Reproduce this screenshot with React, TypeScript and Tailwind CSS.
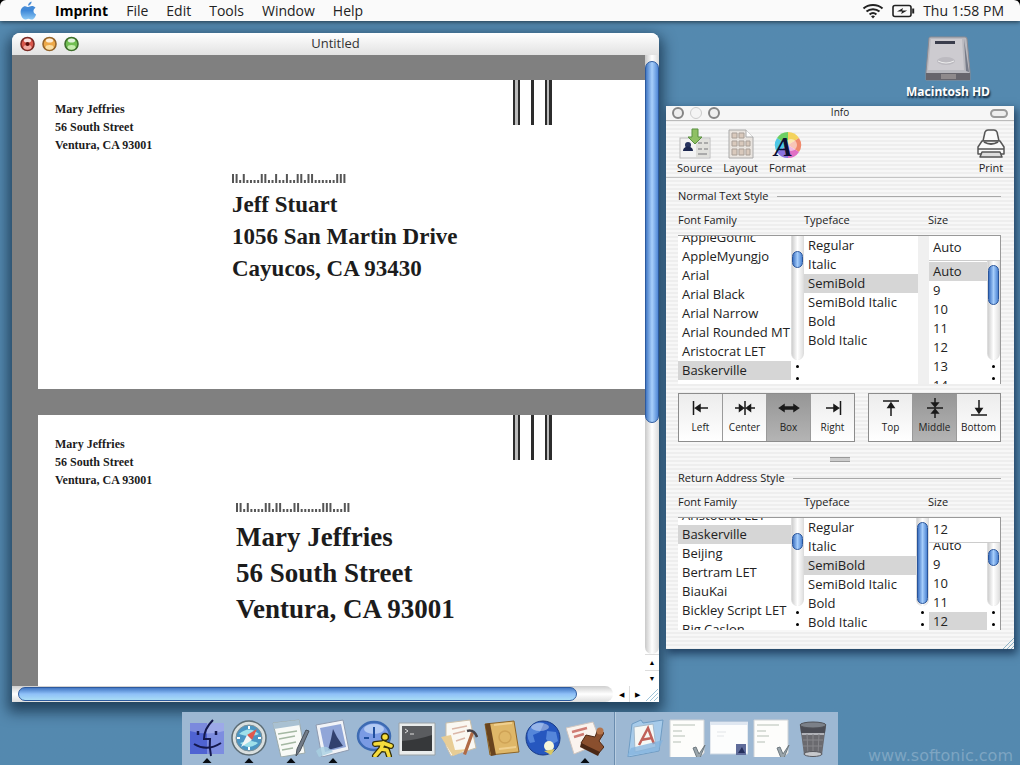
import { ReactNode } from "react";
import clsx from "clsx";

const stripes =
  "bg-[repeating-linear-gradient(180deg,#f7f7f7_0px,#f7f7f7_2px,#eeeeee_2px,#eeeeee_4px)]";

const menus = ["File", "Edit", "Tools", "Window", "Help"];

const lights = [
  { label: "Close", edge: "#7a2a24", fill: "#d9574c", shine: "#f6b9b0" },
  { label: "Minimize", edge: "#94642a", fill: "#eda94a", shine: "#fde9b5" },
  { label: "Zoom", edge: "#3d6e2b", fill: "#71bf52", shine: "#d3f5bd" },
];

const AppleLogo = () => (
  <svg width="17" height="20" viewBox="0 0 17 20" aria-hidden="true">
    <defs>
      <linearGradient id="apple" x1="0" y1="0" x2="0" y2="1">
        <stop offset="0" stopColor="#4f8fd6" />
        <stop offset="0.5" stopColor="#3f88d8" />
        <stop offset="1" stopColor="#8cc8f4" />
      </linearGradient>
    </defs>
    <path
      fill="url(#apple)"
      d="M11.6.6c.2 1.900-1.500 4.100-3.500 4.200C7.900 2.900 9.700.9 11.600.6zM8.200 6.100c.9 0 2-1 3.700-1 1.400 0 2.700.6 3.600 1.700-2.800 1.700-2.600 5.300.6 6.600-.7 2.200-2.300 5.100-4.200 5.100-1.300 0-1.900-.8-3.400-.8s-2.100.8-3.400.8C2.700 18.500.6 14.700.6 11.300.6 7.600 2.800 5.200 5.200 5.200c1.300 0 2.300.9 3 .9z"
    />
  </svg>
);

const MenuBar = () => (
  <header className="relative z-10 flex h-[21px] items-center justify-between rounded-t-md bg-[#fafafa] pl-5 pr-4 text-[14px] text-[#222] shadow-[0_1px_4px_rgba(0,0,0,0.6)]">
    <nav className="flex items-center gap-[18px]">
      <button aria-label="Apple menu">
        <AppleLogo />
      </button>
      <button className="font-bold text-black">Imprint</button>
      {menus.map((m) => (
        <button key={m}>{m}</button>
      ))}
    </nav>
    <div className="flex items-center gap-2">
      <svg width="22" height="16" viewBox="0 0 22 16" fill="none" stroke="#222" strokeWidth="2" aria-label="AirPort">
        <path d="M1.500 5.500C6.500.8 15.500.8 20.500 5.500" />
        <path d="M4.500 8.600c3.500-3.300 9.500-3.300 13 0" />
        <path d="M7.600 11.500c2-1.800 4.800-1.800 6.800 0" />
        <path d="M11 15.500l-2-2.300c1.200-1 2.800-1 4 0z" fill="#222" stroke="none" />
      </svg>
      <svg width="23" height="14" viewBox="0 0 23 14" fill="none" stroke="#222" strokeWidth="1.600" aria-label="Battery">
        <rect x="1" y="1.500" width="18" height="11" rx="2" />
        <path d="M21.200 4.500v5" strokeWidth="2" />
        <path d="M5 7.500l6-3.500-.8 2.500h5l-6 3.600.8-2.600z" fill="#222" stroke="none" />
      </svg>
      <span>Thu 1:58 PM</span>
    </div>
  </header>
);

/* USPS bar code, "|" is a full bar and "." a half bar */
const Barcode = ({ code }: { code: string }) => (
  <svg width="115" height="10" viewBox={`0 0 ${code.length * 3.6} 10`} preserveAspectRatio="none" aria-hidden="true">
    {code.split("").map((c, i) => (
      <rect key={i} x={i * 3.6} y={c === "|" ? 0 : 6} width="2" height={c === "|" ? 9 : 3} fill="#555" />
    ))}
  </svg>
);

type EnvelopeProps = {
  code: string;
  lines: string[];
  className: string;
  textClass: string;
};

const Envelope = ({ code, lines, className, textClass }: EnvelopeProps) => (
  <article className="relative h-[309px] shrink-0 bg-white pl-[17px] pt-5 font-['Liberation_Serif',serif] font-bold text-[#1c1c1c]">
    <svg className="absolute right-[92px] top-0" width="40" height="45" viewBox="0 0 40 45" fill="#2c2c2c" aria-hidden="true">
      <rect x="0" width="2" height="45" />
      <rect x="2" width="4" height="45" fill="#bbb" />
      <rect x="5" width="2" height="45" />
      <rect x="18" width="3" height="45" />
      <rect x="32" width="2" height="45" />
      <rect x="34" width="2" height="45" fill="#bbb" />
      <rect x="36" width="3" height="45" />
    </svg>
    <address className="text-[12px] leading-[18px] not-italic">
      Mary Jeffries
      <br />
      56 South Street
      <br />
      Ventura, CA 93001
    </address>
    <div className={clsx("flex flex-col", className)}>
      <Barcode code={code} />
      <address className={clsx("whitespace-nowrap not-italic", textClass)}>
        {lines.map((l) => (
          <div key={l}>{l}</div>
        ))}
      </address>
    </div>
  </article>
);

const DocumentWindow = () => (
  <section className="absolute bottom-[63px] left-3 right-[361px] top-[33px] flex flex-col overflow-hidden rounded-t-lg bg-white shadow-[0_6px_14px_4px_rgba(0,20,40,0.6)]">
    <div className="relative flex h-[22px] shrink-0 items-center bg-linear-to-b from-white to-[#e2e2e2] px-2">
      <div className="flex gap-[7px]">
        {lights.map((l) => (
          <button key={l.label} aria-label={l.label}>
            <svg width="15" height="16" viewBox="0 0 15 16" className="block">
              <circle cx="7.500" cy="8" r="6.500" fill={l.fill} stroke={l.edge} strokeWidth="1.600" />
              <ellipse cx="7.500" cy="4.500" rx="3.600" ry="2" fill="#fff" opacity="0.800" />
              <ellipse cx="7.500" cy="11.300" rx="4" ry="2.400" fill={l.shine} opacity="0.850" />
              {l.label === "Close" && <circle cx="7.500" cy="8" r="2" fill="#5a0f0c" />}
            </svg>
          </button>
        ))}
      </div>
      <h1 className="absolute inset-x-0 text-center text-[13px] font-medium text-[#333]">Untitled</h1>
    </div>
    <div className="flex min-h-0 flex-1">
      <div className="flex min-w-0 flex-1 flex-col gap-[26px] overflow-hidden bg-[#808080] pl-[26px] pt-[25px]">
        <Envelope
          code="||.|....||..|..|..||.||......|||"
          lines={["Jeff Stuart", "1056 San Martin Drive", "Cayucos, CA 93430"]}
          className="ml-[177px] mt-5 gap-[5px]"
          textClass="text-[23px] leading-8"
        />
        <Envelope
          code="||.|....||.||...||......|||...||"
          lines={["Mary Jeffries", "56 South Street", "Ventura, CA 93001"]}
          className="ml-[181px] mt-[14px] gap-[6px]"
          textClass="text-[27px] leading-9"
        />
      </div>
      <div className="flex w-[14px] shrink-0 flex-col bg-white">
        <div className="flex min-h-0 flex-1 flex-col rounded-b-full bg-linear-to-r from-[#c9c9c9] via-white to-[#dcdcdc] pt-[6px]">
          <div className="h-[61%] rounded-full border border-[#2d5a9e] bg-linear-to-r from-[#4378c4] via-[#a9d0fb] to-[#5189d6]" />
        </div>
        <button aria-label="Scroll up" className="h-4 border-t border-[#ddd] text-[7px] leading-none text-black">▲</button>
        <button aria-label="Scroll down" className="h-4 border-t border-[#ddd] text-[7px] leading-none text-black">▼</button>
      </div>
    </div>
    <div className="flex h-4 shrink-0 bg-white">
      <div className="flex min-w-0 flex-1 rounded-r-full bg-linear-to-b from-[#cfcfcf] via-white to-[#dedede] pl-[6px]">
        <div className="my-px w-[94%] rounded-full border border-[#2d5a9e] bg-linear-to-b from-[#4378c4] via-[#8fc0f8] to-[#a9dcf4]" />
      </div>
      <button aria-label="Scroll left" className="w-4 text-[7px] leading-none text-black">◀</button>
      <button aria-label="Scroll right" className="w-4 border-l border-[#ddd] text-[7px] leading-none text-black">▶</button>
      <svg width="14" height="16" viewBox="0 0 14 16" stroke="#9fc3d8" aria-hidden="true">
        <path d="M1 15L13 3M5 15l8-8M9 15l4-4" />
      </svg>
    </div>
  </section>
);

type ScrollBarProps = { thumb: string };

const ScrollBar = ({ thumb }: ScrollBarProps) => (
  <div className="flex w-[13px] shrink-0 flex-col bg-white">
    <div className="min-h-0 flex-1 rounded-b-full border-x border-[#ddd] bg-linear-to-r from-[#cfcfcf] via-white to-[#e2e2e2]">
      <div className={clsx("rounded-full border border-[#28549b] bg-linear-to-r from-[#3f73c2] via-[#a5cdfb] to-[#4d84d2]", thumb)} />
    </div>
    <span className="flex h-3 items-center justify-center">
      <i className="size-[3px] rounded-full bg-black" />
    </span>
    <span className="flex h-3 items-center justify-center">
      <i className="size-[3px] rounded-full bg-black" />
    </span>
  </div>
);

type FontListProps = {
  label: string;
  items: string[];
  selected: string;
  className?: string;
};

const FontList = ({ label, items, selected, className }: FontListProps) => (
  <div className="min-w-0 flex-1 overflow-hidden bg-white">
    <ul aria-label={label} className={className}>
      {items.map((item) => (
        <li key={item}>
          <button
            aria-pressed={item === selected}
            className={clsx(
              "block h-[19px] w-full overflow-hidden whitespace-nowrap pl-1 text-left leading-[19px]",
              item === selected && "bg-[#d6d6d6]"
            )}
          >
            {item}
          </button>
        </li>
      ))}
    </ul>
  </div>
);

type StylePanelProps = {
  id: string;
  title: string;
  height: string;
  family: ReactNode;
  typeface: ReactNode;
  size: string;
  sizes: ReactNode;
};

const StylePanel = ({ id, title, height, family, typeface, size, sizes }: StylePanelProps) => (
  <section className="pl-3 pr-[13px]">
    <h2 className="flex h-5 items-center gap-2 text-[11px] font-medium after:h-px after:flex-1 after:bg-[#a8a8a8]">{title}</h2>
    <div className="mt-1 grid h-5 grid-cols-[126px_1fr_73px] items-center text-[11px] font-medium">
      <span>Font Family</span>
      <span>Typeface</span>
      <label htmlFor={id}>Size</label>
    </div>
    <div className={clsx("mt-[5px] grid grid-cols-[126px_1fr_72px] text-[13px]", height)}>
      <div className="flex min-h-0 overflow-hidden border-t border-[#999]">{family}</div>
      <div className="flex min-h-0 overflow-hidden border-t border-[#999]">{typeface}</div>
      <div className="flex min-h-0 flex-col overflow-hidden border-r border-t border-[#999] bg-white">
        <div className="h-[25px] shrink-0 border-b border-[#ccc]">
          <input id={id} defaultValue={size} className="block h-[22px] w-full bg-white pl-1 outline-none" />
        </div>
        <div className="flex min-h-0 flex-1">{sizes}</div>
      </div>
    </div>
  </section>
);

const Arrow = ({ d }: { d: string }) => (
  <svg width="22" height="20" viewBox="0 0 22 20" fill="#1a1a1a" stroke="#1a1a1a" strokeWidth="1.500" aria-hidden="true">
    <path d={d} />
  </svg>
);

const horizontal = [
  { label: "Left", d: "M3.500 3v14M8 10h10M5.500 10l4.500-3v6z" },
  { label: "Center", d: "M11 3v14M1 10h5M9.500 10L5.500 7v6zM21 10h-5M12.500 10l4-3v6z" },
  { label: "Box", d: "M1.500 10L6 7v6zM20.500 10L16 7v6zM5 9h12v2H5z" },
  { label: "Right", d: "M18.500 3v14M4 10h10M16.500 10L12 7v6z" },
];

const vertical = [
  { label: "Top", d: "M3 3h16M11 8v10M11 5l-3 4.500h6z" },
  { label: "Middle", d: "M3 10h16M11 0v5M11 8.500L8 5h6zM11 20v-5M11 11.500L8 15h6z" },
  { label: "Bottom", d: "M3 17h16M11 2v10M11 15l-3-4.500h6z" },
];

const Segments = ({ options, active }: { options: { label: string; d: string }[]; active: string }) => (
  <div className="flex border border-[#8c8c8c]">
    {options.map((o) => (
      <button
        key={o.label}
        aria-pressed={o.label === active}
        className={clsx(
          "flex h-[47px] w-[44px] flex-col items-center border-r border-[#9a9a9a] pt-1 text-[10px] font-medium last:w-[43px] last:border-r-0",
          o.label === active ? "bg-linear-to-b from-[#969696] to-[#b4b4b4]" : "bg-linear-to-b from-[#ececec] to-white"
        )}
      >
        <Arrow d={o.d} />
        <span className="leading-[18px]">{o.label}</span>
      </button>
    ))}
  </div>
);

const SourceIcon = () => (
  <svg width="32" height="32" viewBox="0 0 32 32" aria-hidden="true">
    <rect x="1" y="10" width="30" height="20" fill="#f3f3f3" stroke="#bbb" />
    <path d="M17 11h13v18H17z" fill="#e0e0dc" />
    <circle cx="9" cy="17" r="3" fill="#27335e" />
    <path d="M4 23c0-6 10-6 10 0z" fill="#1d2850" />
    <path d="M19 15h4M25 15h4M19 21h4M25 21h4M19 26h9" stroke="#aaa" strokeWidth="2" />
    <path d="M13 1h6v8h4l-7 7-7-7h4z" fill="#8fc064" stroke="#5b9140" />
  </svg>
);

const LayoutIcon = () => (
  <svg width="32" height="32" viewBox="0 0 32 32" aria-hidden="true">
    <path d="M4 2h17l7 7v21H4z" fill="#e9e4df" stroke="#aaa" />
    <path d="M21 2v7h7" fill="#fff" stroke="#aaa" />
    <g fill="#d9c9bc" stroke="#a99f97">
      <path d="M7 5h5v5H7zM14 5h5v5h-5zM7 13h5v5H7zM14 13h5v5h-5zM21 13h4v5h-4zM7 21h5v6H7zM14 21h5v6h-5zM21 21h4v6h-4z" />
    </g>
  </svg>
);

const FormatIcon = () => (
  <svg width="32" height="32" viewBox="0 0 32 32" aria-hidden="true">
    <path d="M16 17L16 4a13 13 0 0 1 11 6z" fill="#f4d35e" />
    <path d="M16 17l11-7a13 13 0 0 1 0 14z" fill="#f08a6c" />
    <path d="M16 17l11 7a13 13 0 0 1-11 6z" fill="#e06fc4" />
    <path d="M16 17v13a13 13 0 0 1-11-6z" fill="#8a72e0" />
    <path d="M16 17L5 24a13 13 0 0 1 0-14z" fill="#4dc7e6" />
    <path d="M16 17L5 10a13 13 0 0 1 11-6z" fill="#6dcf62" />
    <circle cx="19" cy="17" r="6" fill="#fff" opacity="0.500" />
    <text x="2" y="28" fontSize="28" fontWeight="bold" fontStyle="italic" fontFamily="Liberation Serif, serif" fill="#0b0f33">A</text>
  </svg>
);

const PrintIcon = () => (
  <svg width="30" height="32" viewBox="0 0 30 32" fill="#fafafa" stroke="#555" strokeWidth="1.500" strokeLinejoin="round" aria-hidden="true">
    <path d="M7 13L9 4q1-2 3-2h6q2 0 3 2l2 9z" />
    <path d="M6 13h18l4 6v7H2v-7z" />
    <path d="M8 14q7 4 14 0" fill="none" strokeWidth="2" />
    <path d="M2 21h26" />
    <path d="M6 24h18l2 5H4z" fill="#ddd" />
  </svg>
);

const tools = [
  { label: "Source", icon: <SourceIcon /> },
  { label: "Layout", icon: <LayoutIcon /> },
  { label: "Format", icon: <FormatIcon /> },
];

const ToolButton = ({ label, icon }: { label: string; icon: ReactNode }) => (
  <button className="flex flex-col items-center text-[11px] font-medium leading-4">
    {icon}
    {label}
  </button>
);

const InfoWindow = () => (
  <aside className={clsx("absolute right-[6px] top-[106px] w-[348px] pb-[19px] text-[#222] shadow-[2px_4px_8px_1px_rgba(0,20,50,0.6)]", stripes)}>
    <div className="relative flex h-[15px] items-center justify-between border-b border-[#bbb] bg-[#f6f6f6] px-[6px]">
      <div className="flex gap-[6px]">
        <button aria-label="Close info" className="size-3 rounded-full border-2 border-[#858585] bg-[#eee]" />
        <button aria-label="Minimize info" className="size-3 rounded-full border border-[#ccc] bg-[#f4f4f4]" />
        <button aria-label="Zoom info" className="size-3 rounded-full border-2 border-[#858585] bg-[#eee]" />
      </div>
      <h1 className="absolute inset-x-0 top-0 text-center text-[10px] font-medium leading-3">Info</h1>
      <button aria-label="Toggle toolbar" className="h-[9px] w-[18px] rounded-full border-2 border-[#9a9a9a] bg-[#eee]" />
    </div>
    <div className="flex items-end justify-between border-b border-[#c4c4c4] pb-[1px] pl-[11px] pr-2 pt-[7px]">
      <div className="flex gap-[11px]">
        {tools.map((t) => (
          <ToolButton key={t.label} label={t.label} icon={t.icon} />
        ))}
      </div>
      <ToolButton label="Print" icon={<PrintIcon />} />
    </div>
    <div className="pt-2">
      <StylePanel
        id="normal-size"
        title="Normal Text Style"
        height="h-[149px]"
        family={
          <>
            <FontList
              label="Font Family"
              selected="Baskerville"
              className="-mt-2"
              items={["AppleGothic", "AppleMyungjo", "Arial", "Arial Black", "Arial Narrow", "Arial Rounded MT", "Aristocrat LET", "Baskerville"]}
            />
            <ScrollBar thumb="mt-[15px] h-[17px]" />
          </>
        }
        typeface={
          <>
            <FontList
              label="Typeface"
              selected="SemiBold"
              items={["Regular", "Italic", "SemiBold", "SemiBold Italic", "Bold", "Bold Italic"]}
            />
            <div className="w-[11px] bg-[#f0f0f0]" />
          </>
        }
        size="Auto"
        sizes={
          <>
            <FontList label="Sizes" selected="Auto" className="mt-px" items={["Auto", "9", "10", "11", "12", "13", "14"]} />
            <ScrollBar thumb="mt-1 h-10" />
          </>
        }
      />
      <div className="mt-[9px] flex justify-between pl-3 pr-[13px]">
        <Segments options={horizontal} active="Box" />
        <Segments options={vertical} active="Middle" />
      </div>
      <div className="mx-auto mt-[15px] h-[5px] w-5 border-y border-[#999] bg-[#ccc]" />
    </div>
    <div className="pt-[6px]">
      <StylePanel
        id="return-size"
        title="Return Address Style"
        height="h-[113px]"
        family={
          <>
            <FontList
              label="Font Family"
              selected="Baskerville"
              className="-mt-[12px]"
              items={["Aristocrat LET", "Baskerville", "Beijing", "Bertram LET", "BiauKai", "Bickley Script LET", "Big Caslon"]}
            />
            <ScrollBar thumb="mt-[15px] h-[17px]" />
          </>
        }
        typeface={
          <>
            <FontList
              label="Typeface"
              selected="SemiBold"
              items={["Regular", "Italic", "SemiBold", "SemiBold Italic", "Bold", "Bold Italic"]}
            />
            <ScrollBar thumb="mt-1 h-[82px]" />
          </>
        }
        size="12"
        sizes={
          <>
            <FontList label="Sizes" selected="12" className="-mt-[7px]" items={["Auto", "9", "10", "11", "12"]} />
            <ScrollBar thumb="mt-[6px] h-[17px]" />
          </>
        }
      />
    </div>
    <svg className="absolute bottom-0 right-0" width="12" height="12" viewBox="0 0 12 12" stroke="#8fb4c6" aria-hidden="true">
      <path d="M1 12L12 1M5 12l7-7M9 12l3-3" />
    </svg>
  </aside>
);

const HardDrive = () => (
  <button className="absolute right-[30px] top-[36px] flex flex-col items-center text-[12px] font-bold leading-4 text-white [text-shadow:1px_2px_2px_#0a1a2c]">
    <svg width="46" height="48" viewBox="0 0 46 48" aria-hidden="true">
      <path d="M4 2Q4 1 6 1h34q2 0 2 2l3 33v8H1v-8z" fill="#b9b9bf" stroke="#8a8a92" />
      <path d="M6 3h31l2 31H3z" fill="#cdcbd0" />
      <path d="M39 3l5 33-3-1z" fill="#777b88" />
      <rect x="10" y="5" width="20" height="3" fill="#3a3d4c" />
      <ellipse cx="21" cy="25" rx="9" ry="4" fill="#bcbac0" />
      <path d="M13 25q8 4 16 0" stroke="#eee" fill="none" />
      <path d="M1 37h44v7H1z" fill="#67656c" />
      <path d="M16 38h15v5H16z" fill="#8f8a8c" />
    </svg>
    <span>Macintosh HD</span>
  </button>
);

const Page = ({ children }: { children?: ReactNode }) => (
  <>
    <path d="M1 0h34v33l-5 5H1z" fill="#fdfdfb" stroke="#cfd3d6" />
    <path d="M4 5h22M4 11h9M4 16h12M4 22h8" stroke="#cdd4cd" strokeWidth="1.500" />
    {children}
  </>
);

const Check = () => <path d="M24 28l3-1 3 7 6-9-5 13h-3z" fill="#9aa5ab" stroke="#6f7a80" />;

const apps = [
  {
    name: "Finder",
    running: true,
    art: (
      <>
        <path d="M1 3h17v31H1z" fill="#4f63d2" />
        <path d="M18 3h17v31H18z" fill="#7d8de0" />
        <path d="M1 3h34v8q-17 5-34 0z" fill="#fff" opacity="0.250" />
        <path d="M24 0q-9 9-9 19h6q-1 8 1 17" fill="none" stroke="#14184c" strokeWidth="2" />
        <path d="M5 24q13 8 27-1" fill="none" stroke="#14184c" strokeWidth="2" />
        <path d="M9 11v4M27 11v4" stroke="#14184c" strokeWidth="2.500" />
      </>
    ),
  },
  {
    name: "Safari",
    running: true,
    art: (
      <>
        <circle cx="18" cy="18" r="17" fill="#d9dfdf" stroke="#5c6c74" strokeWidth="1.500" />
        <circle cx="18" cy="18" r="13" fill="#4b96c4" stroke="#7b8f98" />
        <path d="M8 14q10-9 20 0-9 4-20 0zM9 23q9 8 18 0-8-4-18 0z" fill="#9fe0ea" />
        <path d="M26 9l-5 11-5-5z" fill="#e0584d" />
        <path d="M10 27l6-12 5 5z" fill="#f3f6f6" />
        <path d="M18 6v3M18 27v3M6 18h3M27 18h3" stroke="#fff" strokeWidth="2" />
      </>
    ),
  },
  {
    name: "TextEdit",
    running: true,
    art: (
      <>
        <path d="M0 3l26-3 6 33-24 4z" fill="#f8faf7" stroke="#9daaa9" />
        <path d="M0 3l26-3 1 5-26 4z" fill="#a9c1d2" />
        <path d="M5 14l19-3M6 19l16-3M8 25l15-3M9 30l11-2" stroke="#a4b8a3" strokeWidth="1.500" />
        <path d="M36 11l-9 20-4 5 1-7 9-19z" fill="#737c88" stroke="#48505a" />
      </>
    ),
  },
  {
    name: "Preview",
    running: true,
    art: (
      <>
        <path d="M1 5l27-5 6 30-27 7z" fill="#f1f3f7" stroke="#8f9bb0" />
        <path d="M5 8l21-4 5 23-21 5z" fill="#91a6d8" />
        <path d="M18 9l4 8 6 9-15 4 3-11z" fill="#32416f" />
        <path d="M1 31q9-9 17 1l-14 5z" fill="#a9cfe1" opacity="0.800" />
      </>
    ),
  },
  {
    name: "AIM",
    art: (
      <>
        <ellipse cx="17" cy="16" rx="16" ry="14" fill="#7a9be4" stroke="#3d6bb3" strokeWidth="2.500" />
        <ellipse cx="17" cy="9" rx="10" ry="5" fill="#d9eafb" opacity="0.600" />
        <path d="M17 7v11M7 18h5" stroke="#1f4f9e" strokeWidth="2" />
        <g fill="none" strokeLinecap="round" strokeLinejoin="round">
          <path d="M27 23l-9 1M26 23l8 3M26 23l-2 6-6 7M24 29l6 1 2 6" stroke="#332e08" strokeWidth="6" />
          <path d="M27 23l-9 1M26 23l8 3M26 23l-2 6-6 7M24 29l6 1 2 6" stroke="#f6dc3d" strokeWidth="3.500" />
        </g>
        <circle cx="28" cy="17" r="3.500" fill="#f6dc3d" stroke="#332e08" strokeWidth="1.500" />
      </>
    ),
  },
  {
    name: "Terminal",
    art: (
      <>
        <path d="M0 3h36v32H0z" fill="#e9ecec" stroke="#9aa2a6" />
        <path d="M3 6h30v25H3z" fill="#36383a" />
        <path d="M3 6h30v9q-15 5-30 6z" fill="#5a5c5f" />
        <path d="M6 9l3 2-3 2M11 14h4" stroke="#ddd" fill="none" />
      </>
    ),
  },
  {
    name: "Script Editor",
    art: (
      <>
        <path d="M5 3l24-3 6 28-25 8-5-10z" fill="#faf8f2" stroke="#cbbfa9" />
        <path d="M0 17l10-2 4 15 13-1-15 7z" fill="#e8cd95" />
        <path d="M11 9l15-3M12 14l12-3M15 21l9-3" stroke="#dab7a8" strokeWidth="1.500" />
        <path d="M33 13l-8 22-3-1 8-22z" fill="#b06a45" />
        <path d="M26 11q7-2 10 6" fill="none" stroke="#474247" strokeWidth="2.500" />
      </>
    ),
  },
  {
    name: "Address Book",
    art: (
      <>
        <path d="M2 4l29-3 5 31-29 3z" fill="#dfb768" stroke="#8c6427" />
        <path d="M2 4l5-1 6 32-5 1z" fill="#68431e" />
        <path d="M11 5l18-2M16 29l17-2" stroke="#f0d08f" strokeWidth="2" />
        <circle cx="22" cy="17" r="6" fill="none" stroke="#cfa356" strokeWidth="1.500" />
      </>
    ),
  },
  {
    name: "Network",
    art: (
      <>
        <circle cx="18" cy="18" r="17" fill="#2657bf" stroke="#183a86" />
        <path d="M5 8q7-8 14-5l-4 9-7 3 2 7-5 1q-5-8 0-15zM22 11l9 1 2 9-7 4-5-6z" fill="#5586da" />
        <ellipse cx="15" cy="7" rx="9" ry="4" fill="#fff" opacity="0.400" />
        <circle cx="24" cy="26" r="5" fill="#f7f7da" />
        <path d="M19 31l7 4 4-6z" fill="#d9c765" />
      </>
    ),
  },
  {
    name: "Imprint",
    running: true,
    art: (
      <>
        <path d="M-1 8l27-6 8 21-27 11z" fill="#faf3ee" stroke="#cfc5bf" />
        <path d="M5 12l15-4M7 17l10-3" stroke="#cf7c74" strokeWidth="2.500" />
        <path d="M14 23l5-8 9 2 3-8 6 4-5 8 5 6-6 7z" fill="#8a4f2e" stroke="#4d2815" />
        <path d="M14 23l19 9-2 4-18-9z" fill="#4a2715" />
        <circle cx="33" cy="11" r="3.500" fill="#b5754c" />
      </>
    ),
  },
];

const docs = [
  {
    name: "Applications",
    art: (
      <>
        <path d="M5 4l9-4 2 3 20-3-4 31-31 6z" fill="#a7cbea" stroke="#6f9cc3" />
        <path d="M7 7l19-3 3 23-21 5z" fill="#f6f8f5" stroke="#a4bacb" />
        <path d="M12 25l9-17 6 16M14 20l11-2" fill="none" stroke="#c0615a" strokeWidth="2.500" />
        <path d="M0 36L4 28l32-8-5 11z" fill="#83b3de" opacity="0.750" />
      </>
    ),
  },
  { name: "Letter", art: <Page><Check /></Page> },
  {
    name: "Untitled window",
    art: (
      <>
        <path d="M-1 2h38v32H-1z" fill="#fcfdfd" stroke="#ccd6e2" />
        <path d="M-1 2h38v3H-1z" fill="#dfe7f1" />
        <path d="M6 12h9M6 16h7" stroke="#e2e5e8" />
        <path d="M25 24h10v11H25z" fill="#5f6c9a" />
        <path d="M27 33l4-6 3 6z" fill="#252f5c" />
      </>
    ),
  },
  { name: "Notes", art: <Page><Check /></Page> },
  {
    name: "Trash",
    art: (
      <>
        <path d="M5 5h26l-4 30H9z" fill="#6a6a6f" />
        <path d="M5 5h26l-1 8H6z" fill="#4b4d55" />
        <ellipse cx="18" cy="5" rx="13" ry="3" fill="#7b8088" stroke="#505258" />
        <path d="M7 14h22" stroke="#c9cbd0" strokeWidth="1.500" />
        <path d="M8 20h20M8 26h19M12 14l1 21M18 14v21M24 14l-1 21" stroke="#86868b" />
        <ellipse cx="18" cy="34" rx="9" ry="2.500" fill="#c7c9cd" stroke="#58595f" />
      </>
    ),
  },
];

type DockItemProps = { name: string; art: ReactNode; running?: boolean };

const DockItem = ({ name, art, running }: DockItemProps) => (
  <button aria-label={name} className="flex w-[42px] flex-col items-center pt-[7px]">
    <svg width="38" height="38" viewBox="-1 -1 38 38">{art}</svg>
    {running && (
      <svg width="10" height="5" viewBox="0 0 10 5" className="mt-px">
        <path d="M5 0l4.500 5h-9z" fill="#080c12" />
      </svg>
    )}
  </button>
);

const Dock = () => (
  <footer className="absolute inset-x-0 bottom-0 flex justify-center">
    <div className="flex h-[53px] bg-[#9db8d3] px-1">
      {apps.map((a) => (
        <DockItem key={a.name} {...a} />
      ))}
      <div className="mx-2 w-[2px] border-l border-[#6a8cae] bg-[#b9cde0]" />
      {docs.map((d) => (
        <DockItem key={d.name} {...d} />
      ))}
    </div>
  </footer>
);

export default function App() {
  return (
    <main className="relative h-screen overflow-hidden bg-linear-to-b from-black from-[8px] to-[#5489af] to-[8px] font-['Open_Sans','Noto_Sans',sans-serif]">
      <MenuBar />
      <HardDrive />
      <DocumentWindow />
      <InfoWindow />
      <Dock />
      <span className="absolute bottom-[-3px] right-[7px] font-['DejaVu_Sans',sans-serif] text-[16px] leading-6 text-white/25">
        www.softonic.com
      </span>
    </main>
  );
}
